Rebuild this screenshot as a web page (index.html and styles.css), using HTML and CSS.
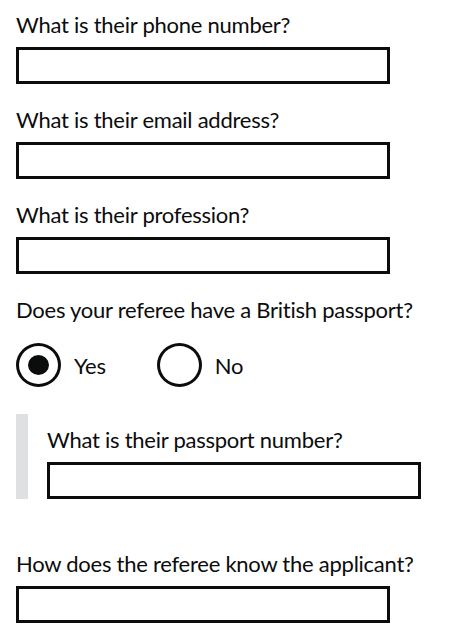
FILE: index.html
```html
<!DOCTYPE html>
<html lang="en">
<head>
    <meta charset="UTF-8">
    <meta name="viewport" content="width=device-width, initial-scale=1.0">
    <title>Referee details</title>
    <link rel="stylesheet" href="styles.css">
</head>
<body>
    <form class="form">
        <div class="form-group">
            <label class="label" for="phone">What is their phone number?</label>
            <input class="input" id="phone" type="tel">
        </div>

        <div class="form-group">
            <label class="label" for="email">What is their email address?</label>
            <input class="input" id="email" type="email">
        </div>

        <div class="form-group">
            <label class="label" for="profession">What is their profession?</label>
            <input class="input" id="profession" type="text">
        </div>

        <fieldset class="fieldset">
            <legend class="legend">Does your referee have a British passport?</legend>
            <div class="radios">
                <label class="radio">
                    <input type="radio" name="passport" value="yes" checked>
                    <span class="radio-mark"></span>
                    <span class="radio-text">Yes</span>
                </label>
                <label class="radio">
                    <input type="radio" name="passport" value="no">
                    <span class="radio-mark"></span>
                    <span class="radio-text">No</span>
                </label>
            </div>

            <div class="conditional">
                <label class="label" for="passport-number">What is their passport number?</label>
                <input class="input" id="passport-number" type="text">
            </div>
        </fieldset>

        <div class="form-group last">
            <label class="label" for="relationship">How does the referee know the applicant?</label>
            <input class="input" id="relationship" type="text">
        </div>
    </form>
</body>
</html>
```

FILE: styles.css
```css
body {
    margin: 0;
    padding: 12px 16px;
    background: #ffffff;
    color: #0b0c0c;
    font-family: Lato, "Noto Sans", Arial, sans-serif;
    font-size: 22px;
    line-height: 25px;
    letter-spacing: -0.25px;
}
.form-group {
    margin-bottom: 23px;
}
.label,
.legend {
    display: block;
    margin-bottom: 10px;
}
.input {
    display: block;
    box-sizing: border-box;
    width: 374px;
    height: 37px;
    margin: 0;
    padding: 4px 6px;
    border: 3px solid #0b0c0c;
    border-radius: 0;
    background: #ffffff;
    font: inherit;
}
.fieldset {
    margin: 0 0 52px;
    padding: 0;
    border: none;
    min-width: 0;
}
.legend {
    padding: 0;
    margin-bottom: 21px;
}
.radios {
    display: flex;
    gap: 51px;
    margin-bottom: 27px;
}
.radio {
    position: relative;
    display: flex;
    align-items: center;
    gap: 13px;
    cursor: pointer;
}
.radio input {
    position: absolute;
    opacity: 0;
    width: 1px;
    height: 1px;
    margin: 0;
}
.radio-mark {
    position: relative;
    box-sizing: border-box;
    width: 45px;
    height: 44px;
    border: 3px solid #0b0c0c;
    border-radius: 50%;
    background: #ffffff;
}
.radio input:checked + .radio-mark::after {
    content: "";
    position: absolute;
    top: 9px;
    left: 9px;
    width: 21px;
    height: 20px;
    border-radius: 50%;
    background: #0b0c0c;
}
.conditional {
    border-left: 12px solid #dfe0e2;
    padding: 13px 0 0 19px;
}
.conditional .input {
    width: 374px;
}
.last {
    margin-bottom: 0;
}
```
